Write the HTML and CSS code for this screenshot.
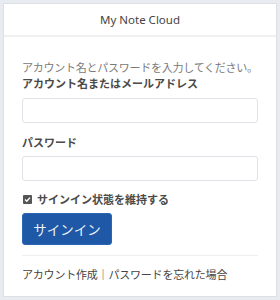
FILE: index.html
```html
<!DOCTYPE html>
<html lang="ja">
<head>
<meta charset="utf-8">
<title>My Note Cloud</title>
<link rel="stylesheet" href="styles.css">
</head>
<body>
<div class="card">
  <div class="card-header">My Note Cloud</div>
  <div class="card-body">
    <p class="lead">アカウント名とパスワードを入力してください。</p>
    <label class="label" for="acc">アカウント名またはメールアドレス</label>
    <input class="input" id="acc" type="text">
    <label class="label label-pw" for="pw">パスワード</label>
    <input class="input" id="pw" type="password">
    <div class="remember">
      <span class="check"><svg width="9" height="9" viewBox="0 0 9 9"><path d="M2 4.6 L3.8 6.3 L7 2.6" fill="none" stroke="#fff" stroke-width="1.4"/></svg></span>
      <span class="remember-text">サインイン状態を維持する</span>
    </div>
    <button class="btn" type="button">サインイン</button>
    <hr class="sep">
    <div class="links">アカウント作成｜パスワードを忘れた場合</div>
  </div>
</div>
</body>
</html>
```
FILE: styles.css
```css
html, body {
  margin: 0;
  padding: 0;
}
body {
  background: #e8ebef;
  padding: 3px;
  font-family: "Noto Sans CJK JP", "Noto Sans", sans-serif;
  width: 280px;
  height: 300px;
  box-sizing: border-box;
}
.card {
  background: #fff;
  border: 1px solid #dde1e5;
  height: 294px;
  box-sizing: border-box;
  display: flex;
  flex-direction: column;
}
.card-header {
  height: 31px;
  border-bottom: 2px solid #eef0f2;
  display: flex;
  align-items: center;
  justify-content: center;
  font-family: "Noto Sans", "Noto Sans CJK JP", sans-serif;
  font-size: 11.5px;
  color: #444;
}
.card-body {
  padding: 22px 18px 0 18px;
  display: flex;
  flex-direction: column;
}
.lead {
  margin: 0;
  font-size: 11px;
  line-height: 16px;
  color: #7a7a7a;
  white-space: nowrap;
  letter-spacing: -0.25px;
}
.label {
  display: block;
  font-size: 11px;
  line-height: 16px;
  font-weight: bold;
  color: #4a4a4a;
}
.label-pw {
  margin-top: 11px;
}
.input {
  margin: 7px 0 0 0;
  height: 25px;
  width: 236px;
  box-sizing: border-box;
  border: 1px solid #dfe2e6;
  border-radius: 3px;
  padding: 0 6px;
  background: #fff;
}
.label-pw + .input {
  margin-top: 6px;
}
.remember {
  margin-top: 10px;
  height: 16px;
  display: flex;
  align-items: center;
  gap: 5px;
  padding-left: 1px;
}
.check {
  width: 9px;
  height: 9px;
  background: #555;
  border-radius: 1px;
  display: flex;
}
.remember-text {
  font-size: 11px;
  font-weight: bold;
  color: #4a4a4a;
}
.btn {
  margin-top: 6px;
  align-self: flex-start;
  width: 90px;
  height: 32px;
  background: #1f58a6;
  border: 1px solid #2a66b8;
  border-radius: 3px;
  color: #eef2f8;
  font-family: "Noto Sans CJK JP", sans-serif;
  font-size: 13.5px;
  padding: 0;
}
.sep {
  margin: 10px 0 0 0;
  border: 0;
  border-top: 1px solid #eceef0;
  width: 236px;
}
.links {
  margin-top: 10px;
  font-size: 11px;
  line-height: 16px;
  color: #444;
  white-space: nowrap;
  letter-spacing: -0.2px;
}
```
